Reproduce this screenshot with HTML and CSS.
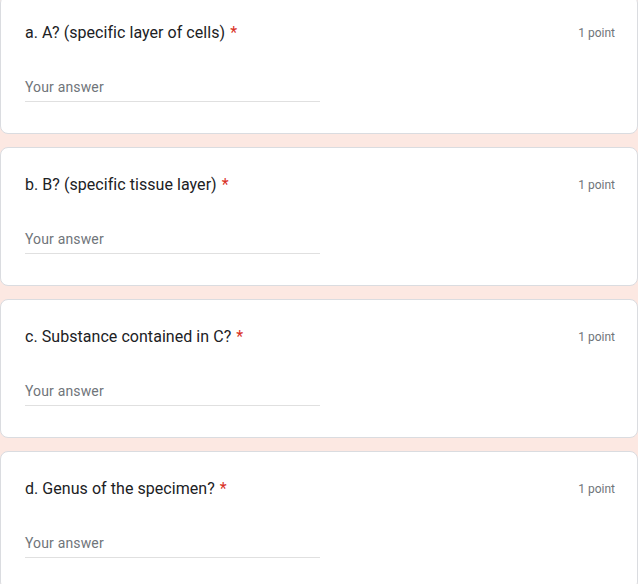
FILE: index.html
```html
<!DOCTYPE html>
<html>
<head>
<meta charset="utf-8">
<link rel="stylesheet" href="styles.css">
</head>
<body>
<div class="form">
  <div class="card">
    <div class="head">
      <div class="title">a. A? (specific layer of cells)<span class="req">*</span></div>
      <div class="points">1 point</div>
    </div>
    <div class="answer"><span class="ph">Your answer</span></div>
  </div>
  <div class="card">
    <div class="head">
      <div class="title">b. B? (specific tissue layer)<span class="req">*</span></div>
      <div class="points">1 point</div>
    </div>
    <div class="answer"><span class="ph">Your answer</span></div>
  </div>
  <div class="card">
    <div class="head">
      <div class="title">c. Substance contained in C?<span class="req">*</span></div>
      <div class="points">1 point</div>
    </div>
    <div class="answer"><span class="ph">Your answer</span></div>
  </div>
  <div class="card">
    <div class="head">
      <div class="title">d. Genus of the specimen?<span class="req">*</span></div>
      <div class="points">1 point</div>
    </div>
    <div class="answer"><span class="ph">Your answer</span></div>
  </div>
</div>
</body>
</html>
```
FILE: styles.css
```css
html, body {
  margin: 0;
  padding: 0;
  background: #fce8e2;
  overflow: hidden;
}
.form {
  margin-top: -5px;
  display: flex;
  flex-direction: column;
  gap: 13px;
}
.card {
  background: #fff;
  border: 1px solid #dadce0;
  border-radius: 8px;
  padding: 25px 22px 31px 24px;
  box-sizing: border-box;
  height: 139px;
}
.head {
  display: flex;
  justify-content: space-between;
  align-items: center;
  height: 24px;
}
.title {
  font-family: Roboto, "Liberation Sans", sans-serif;
  font-size: 16px;
  line-height: 24px;
  color: #202124;
  letter-spacing: 0.05px;
}
.req {
  color: #d93025;
  margin-left: 5px;
}
.points {
  font-family: Roboto, "Liberation Sans", sans-serif;
  font-size: 12px;
  color: #70757a;
}
.answer {
  margin-top: 27px;
  width: 50%;
  height: 30px;
  box-sizing: border-box;
  border-bottom: 1px solid #e0e0e0;
  display: flex;
  align-items: center;
  padding-top: 1px;
}
.ph {
  font-family: Roboto, "Liberation Sans", sans-serif;
  font-size: 14px;
  letter-spacing: 0.15px;
  color: #70757a;
}
```
